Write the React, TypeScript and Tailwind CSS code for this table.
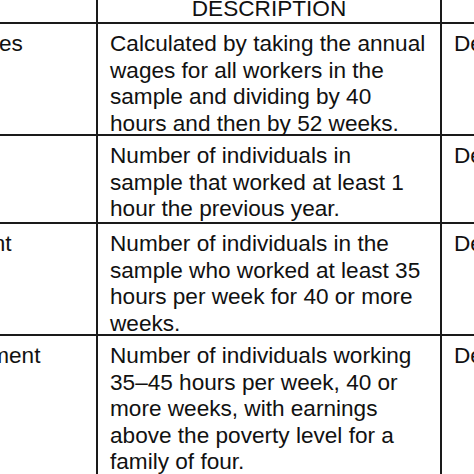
const rows = [
  {
    variable: "Hourly wages",
    lines: [
      "Calculated by taking the annual",
      "wages for all workers in the",
      "sample and dividing by 40",
      "hours and then by 52 weeks.",
    ],
    source: "Decennial Census",
    h: "h-[112px]",
  },
  {
    variable: "Workers",
    lines: [
      "Number of individuals in",
      "sample that worked at least 1",
      "hour the previous year.",
    ],
    source: "Decennial Census",
    h: "h-[88px]",
  },
  {
    variable: "Employment",
    lines: [
      "Number of individuals in the",
      "sample who worked at least 35",
      "hours per week for 40 or more",
      "weeks.",
    ],
    source: "Decennial Census",
    h: "h-[112px]",
  },
  {
    variable: "All employment",
    lines: [
      "Number of individuals working",
      "35–45 hours per week, 40 or",
      "more weeks, with earnings",
      "above the poverty level for a",
      "family of four.",
    ],
    source: "Decennial Census",
    h: "h-[160px]",
  },
];

export default function App() {
  return (
    <div className="w-[474px] h-[474px] overflow-hidden bg-white text-[#111] font-['Liberation_Sans',Arial,sans-serif] text-[22.6px] leading-[26.5px]">
      <div className="ml-[-126px] w-[820px]">
        {/* header */}
        <div className="flex h-[24px] border-b-2 border-[#1a1a1a]">
          <div className="w-[224px] border-r-2 border-[#1a1a1a]" />
          <div className="w-[344px] border-r-2 border-[#1a1a1a] text-center leading-[18px]">
            DESCRIPTION
          </div>
          <div className="w-[252px] text-center leading-[18px]">SOURCE</div>
        </div>

        {rows.map((r) => (
          <div key={r.variable} className={`flex border-b-2 border-[#1a1a1a] ${r.h}`}>
            <div className="w-[224px] border-r-2 border-[#1a1a1a] pl-[12px] pt-[7px] whitespace-nowrap">
              {r.variable}
            </div>
            <div className="w-[344px] border-r-2 border-[#1a1a1a] pl-[12px] pr-[12px] pt-[7px] whitespace-nowrap">
              {r.lines.map((l) => (
                <div key={l}>{l}</div>
              ))}
            </div>
            <div className="w-[252px] pl-[12px] pt-[7px] whitespace-nowrap">{r.source}</div>
          </div>
        ))}
      </div>
    </div>
  );
}
